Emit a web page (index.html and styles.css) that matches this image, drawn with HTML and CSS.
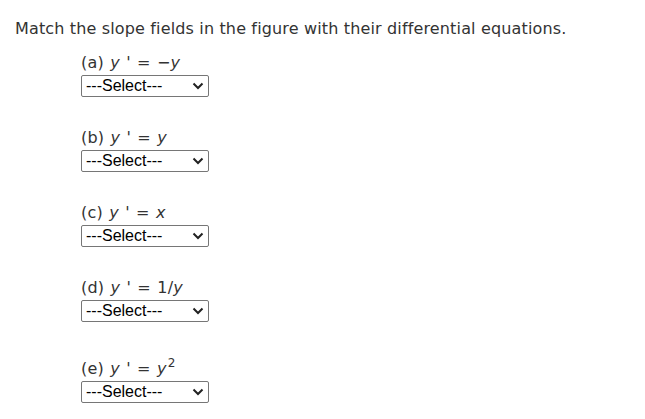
FILE: index.html
```html
<!DOCTYPE html>
<html>
<head>
<meta charset="utf-8">
<link rel="stylesheet" href="styles.css">
</head>
<body>
<div class="question">
  <p class="prompt">Match the slope fields in the figure with their differential equations.</p>
  <div class="items">
    <div class="item">
      <div class="label">(a) <i>y</i> ' = −<i>y</i></div>
      <div class="select-wrap">
        <select class="choice"><option>---Select---</option></select>
        <svg class="chev" width="12" height="8" viewBox="0 0 12 8"><path d="M1.5 1.5 L6 6 L10.5 1.5" fill="none" stroke="#222" stroke-width="2"/></svg>
      </div>
    </div>
    <div class="item">
      <div class="label">(b) <i>y</i> ' = <i>y</i></div>
      <div class="select-wrap">
        <select class="choice"><option>---Select---</option></select>
        <svg class="chev" width="12" height="8" viewBox="0 0 12 8"><path d="M1.5 1.5 L6 6 L10.5 1.5" fill="none" stroke="#222" stroke-width="2"/></svg>
      </div>
    </div>
    <div class="item">
      <div class="label">(c) <i>y</i> ' = <i>x</i></div>
      <div class="select-wrap">
        <select class="choice"><option>---Select---</option></select>
        <svg class="chev" width="12" height="8" viewBox="0 0 12 8"><path d="M1.5 1.5 L6 6 L10.5 1.5" fill="none" stroke="#222" stroke-width="2"/></svg>
      </div>
    </div>
    <div class="item">
      <div class="label">(d) <i>y</i> ' = 1/<i>y</i></div>
      <div class="select-wrap">
        <select class="choice"><option>---Select---</option></select>
        <svg class="chev" width="12" height="8" viewBox="0 0 12 8"><path d="M1.5 1.5 L6 6 L10.5 1.5" fill="none" stroke="#222" stroke-width="2"/></svg>
      </div>
    </div>
    <div class="item">
      <div class="label">(e) <i>y</i> ' = <i>y</i><sup>2</sup></div>
      <div class="select-wrap">
        <select class="choice"><option>---Select---</option></select>
        <svg class="chev" width="12" height="8" viewBox="0 0 12 8"><path d="M1.5 1.5 L6 6 L10.5 1.5" fill="none" stroke="#222" stroke-width="2"/></svg>
      </div>
    </div>
  </div>
</div>
</body>
</html>
```
FILE: styles.css
```css
html, body {
  margin: 0;
  padding: 0;
  background: #fff;
}
.question {
  padding: 19px 15px 0 15px;
  font-family: "DejaVu Sans", Verdana, sans-serif;
  font-size: 16px;
  color: #333;
}
.prompt {
  margin: 0;
  line-height: 20px;
  letter-spacing: 0.15px;
}
.items {
  margin-left: 66px;
  margin-top: 14px;
  display: flex;
  flex-direction: column;
  gap: 31px;
}
.item {
  display: flex;
  flex-direction: column;
  align-items: flex-start;
}
.label {
  line-height: 20px;
  margin-bottom: 2px;
  letter-spacing: 0.2px;
  word-spacing: 1px;
}
.label sup {
  font-size: 12px;
  vertical-align: 7px;
  line-height: 20px;
  margin-left: 1px;
}
.select-wrap {
  position: relative;
  width: 128px;
  height: 22px;
}
.choice {
  -webkit-appearance: none;
  appearance: none;
  box-sizing: border-box;
  width: 128px;
  height: 22px;
  margin: 0;
  padding: 0 0 0 4px;
  border: 1px solid #767676;
  border-radius: 2px;
  background: #fff;
  font-family: "Liberation Sans", Arial, sans-serif;
  font-size: 16px;
  line-height: 20px;
  color: #000;
}
.chev {
  position: absolute;
  right: 5px;
  top: 7px;
  pointer-events: none;
}
```
